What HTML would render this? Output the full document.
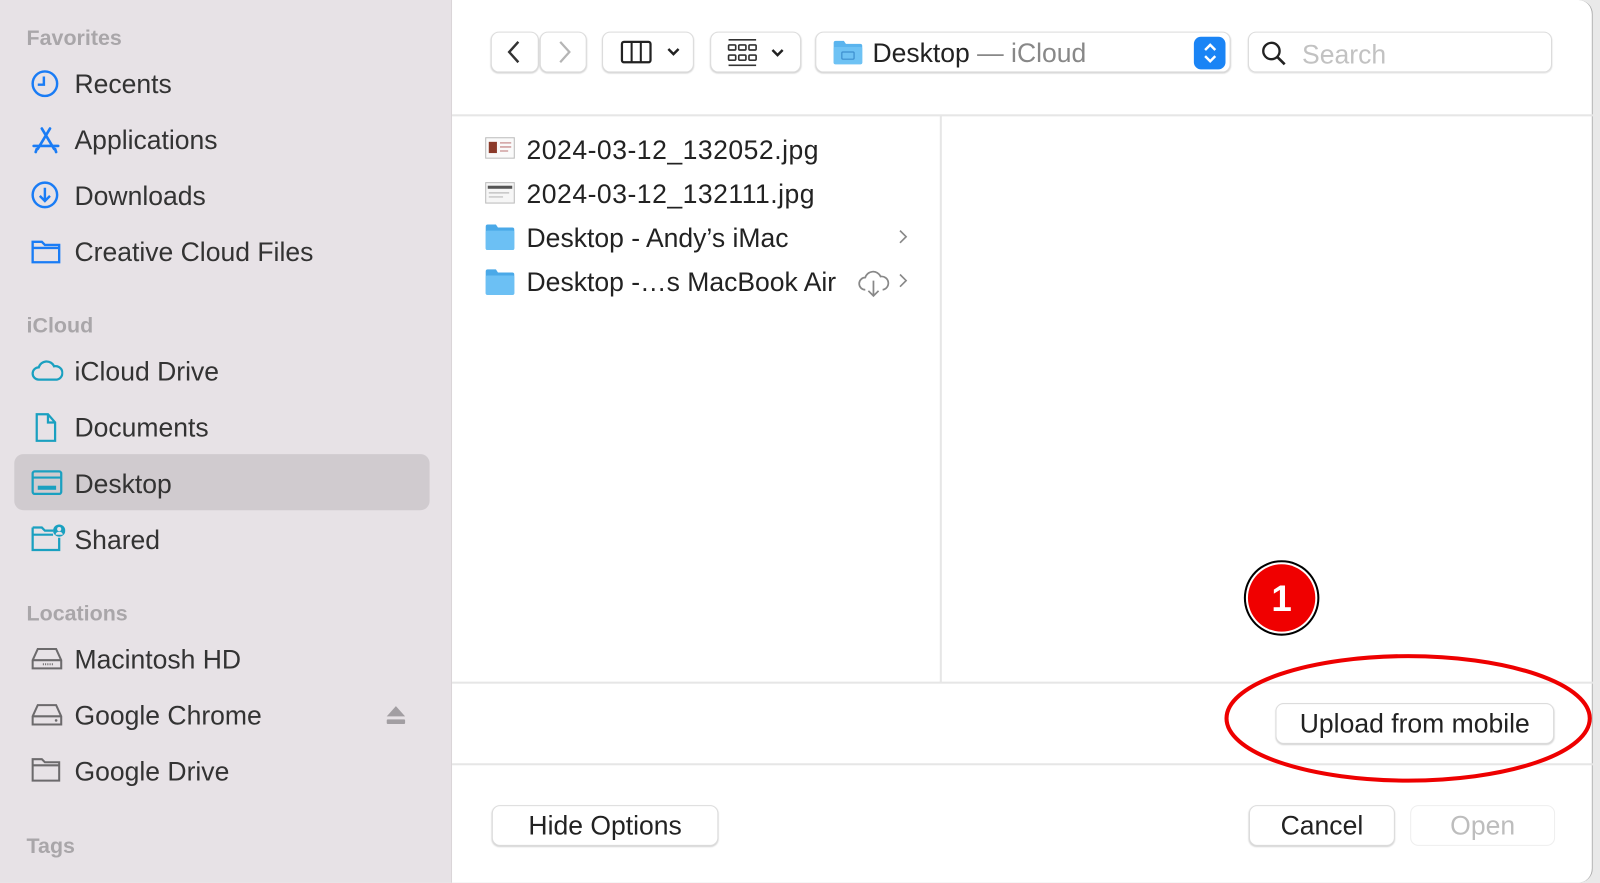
<!DOCTYPE html>
<html><head><meta charset="utf-8"><style>
*{margin:0;padding:0;box-sizing:border-box}
body{width:1600px;height:882px;overflow:hidden;background:#e9e9e9;font-family:"Liberation Sans",Helvetica,Arial,sans-serif;position:relative;color:#262626}
#w{position:absolute;left:0;top:0;width:1568px;height:865px;transform:scale(1.0204);transform-origin:0 0}
.side{position:absolute;left:0;top:0;width:443px;height:865px;background:#e7e2e6;border-right:1px solid #d9d5d8}
.hdr{position:absolute;left:26px;font-size:21px;font-weight:bold;color:#a9a6a9}
.it{position:absolute;left:73px;font-size:26px;color:#333;margin-top:1px}
.ic{position:absolute;left:30px}
.sel{position:absolute;left:14px;top:445px;width:407px;height:55px;background:#d0cbcf;border-radius:9px}
.main{position:absolute;left:443px;top:0;width:1118px;height:865px;background:#fff;border-bottom-right-radius:14px;border-top-right-radius:14px;border-right:1px solid #aaa}
.btn{position:absolute;background:#fff;border:1px solid #dcdcdc;border-radius:8px;box-shadow:0 1px 1.5px rgba(0,0,0,.18)}
.hl{position:absolute;left:0;width:1118px;height:2px;background:#e6e6e6}
.f{position:absolute;left:73px;font-size:26px;color:#222;letter-spacing:0.5px;margin-top:1px}
.bt{position:absolute;font-size:26px;text-align:center;color:#222;margin-top:1px}
</style></head><body><div id="w">
<div class="side">
<div class="hdr" style="top:26px">Favorites</div>
<svg class="ic" style="top:68px" width="28" height="28" viewBox="0 0 28 28"><circle cx="14" cy="14" r="12" fill="none" stroke="#1a7cf5" stroke-width="2.4"/><path d="M13 7v8h-6" fill="none" stroke="#1a7cf5" stroke-width="2.4"/></svg>
<div class="it" style="top:66px">Recents</div>
<svg class="ic" style="top:122px" width="30" height="30" viewBox="0 0 30 30"><path d="M11 4l12 20M19 4L7 24M3 21h24M6 24l-1 3M24 24l1 3" fill="none" stroke="#1a7cf5" stroke-width="2.6" stroke-linecap="round"/></svg>
<div class="it" style="top:121px">Applications</div>
<svg class="ic" style="top:177px" width="28" height="28" viewBox="0 0 28 28"><circle cx="14" cy="14" r="12" fill="none" stroke="#1a7cf5" stroke-width="2.4"/><path d="M14 7v13M9 15l5 5 5-5" fill="none" stroke="#1a7cf5" stroke-width="2.4"/></svg>
<div class="it" style="top:176px">Downloads</div>
<svg class="ic" style="top:233px" width="30" height="26" viewBox="0 0 30 26"><path d="M2 4h9l3 3h14v17H2zM2 10h26" fill="none" stroke="#1a7cf5" stroke-width="2.3"/></svg>
<div class="it" style="top:231px">Creative Cloud Files</div>
<div class="hdr" style="top:308px">iCloud</div>
<svg class="ic" style="top:351px" width="32" height="24" viewBox="0 0 32 24"><path d="M8 21a6 6 0 010-12 8 8 0 0115-1 6.5 6.5 0 013 13z" fill="none" stroke="#1aa0c0" stroke-width="2.2"/></svg>
<div class="it" style="top:348px">iCloud Drive</div>
<svg class="ic" style="top:404px" width="28" height="30" viewBox="0 0 28 30"><path d="M6 2h11l7 8v18H6z M17 2v8h7" fill="none" stroke="#1aa0c0" stroke-width="2.2"/></svg>
<div class="it" style="top:403px">Documents</div>
<div class="sel"></div>
<svg class="ic" style="top:460px" width="32" height="26" viewBox="0 0 32 26"><rect x="2" y="2" width="28" height="22" rx="2" fill="none" stroke="#1aa0c0" stroke-width="2.2"/><path d="M2 8h28" stroke="#1aa0c0" stroke-width="2"/><rect x="7" y="16" width="18" height="4" fill="#1aa0c0"/></svg>
<div class="it" style="top:458px">Desktop</div>
<svg class="ic" style="top:512px" width="34" height="30" viewBox="0 0 34 30"><path d="M2 5h9l3 3h8M2 5v22h26v-12M2 12h20" fill="none" stroke="#1aa0c0" stroke-width="2.2"/><circle cx="28" cy="8" r="6" fill="#1aa0c0"/><circle cx="28" cy="6.5" r="2" fill="#e7e2e6"/><path d="M24.5 12a3.5 3 0 017 0" fill="#e7e2e6"/></svg>
<div class="it" style="top:513px">Shared</div>
<div class="hdr" style="top:590px">Locations</div>
<svg class="ic" style="top:633px" width="32" height="26" viewBox="0 0 32 26"><path d="M2 14l5-11h18l5 11v8H2z M2 14h28" fill="none" stroke="#6c6a6c" stroke-width="2"/><path d="M12 18h10" stroke="#6c6a6c" stroke-width="2" stroke-dasharray="1 1.2"/></svg>
<div class="it" style="top:630px">Macintosh HD</div>
<svg class="ic" style="top:688px" width="32" height="26" viewBox="0 0 32 26"><path d="M2 14l5-11h18l5 11v8H2z M2 14h28" fill="none" stroke="#6c6a6c" stroke-width="2"/><circle cx="25" cy="18" r="1.3" fill="#6c6a6c"/></svg>
<div class="it" style="top:685px">Google Chrome</div>
<svg style="position:absolute;left:378px;top:691px" width="20" height="19" viewBox="0 0 20 19"><path d="M10 1l9 10H1z" fill="#a29ea2"/><rect x="1" y="14" width="18" height="4.5" rx="1" fill="#a29ea2"/></svg>
<svg class="ic" style="top:741px" width="30" height="26" viewBox="0 0 30 26"><path d="M2 3h9l3 3h14v18H2zM2 9h26" fill="none" stroke="#6c6a6c" stroke-width="2"/></svg>
<div class="it" style="top:740px">Google Drive</div>
<div class="hdr" style="top:818px">Tags</div>
</div>
<div class="main">
<div class="btn" style="left:38px;top:31px;width:47px;height:40px"></div>
<svg style="position:absolute;left:52px;top:39px" width="18" height="24"><path d="M13 2L4 12l9 10" fill="none" stroke="#333" stroke-width="2.4"/></svg>
<div class="btn" style="left:86px;top:31px;width:46px;height:40px"></div>
<svg style="position:absolute;left:101px;top:39px" width="18" height="24"><path d="M5 2l9 10-9 10" fill="none" stroke="#b5b5b5" stroke-width="2.2"/></svg>
<div class="btn" style="left:147px;top:31px;width:90px;height:40px"></div>
<svg style="position:absolute;left:165px;top:39px" width="60" height="24"><rect x="1.5" y="2" width="28" height="20" rx="2" fill="none" stroke="#222" stroke-width="2.2"/><path d="M11 2v20M20 2v20" stroke="#222" stroke-width="2"/><path d="M47 9l5 5 5-5" fill="none" stroke="#222" stroke-width="2.4"/></svg>
<div class="btn" style="left:253px;top:31px;width:89px;height:40px"></div>
<svg style="position:absolute;left:269px;top:37px" width="64" height="28"><path d="M2 2h27M2 27h27" stroke="#333" stroke-width="1.6"/><g fill="none" stroke="#333" stroke-width="1.6"><rect x="2" y="7" width="7" height="5" rx="1"/><rect x="12" y="7" width="7" height="5" rx="1"/><rect x="22" y="7" width="7" height="5" rx="1"/><rect x="2" y="17" width="7" height="5" rx="1"/><rect x="12" y="17" width="7" height="5" rx="1"/><rect x="22" y="17" width="7" height="5" rx="1"/></g><path d="M45 12l5 5 5-5" fill="none" stroke="#222" stroke-width="2.4"/></svg>
<div class="btn" style="left:356px;top:31px;width:407px;height:40px"></div>
<svg style="position:absolute;left:373px;top:38px" width="30" height="26"><path d="M1 4a2 2 0 012-2h8l2 3h14a2 2 0 012 2v16a2 2 0 01-2 2H3a2 2 0 01-2-2z" fill="#5ab4ee"/><rect x="1" y="8" width="28" height="17" rx="1.5" fill="#6ec2f4"/><rect x="9" y="13" width="12" height="7" rx="1" fill="none" stroke="#3d8fcf" stroke-width="1.2"/></svg>
<div style="position:absolute;left:412px;top:37px;font-size:26px;color:#222">Desktop <span style="color:#888">— iCloud</span></div>
<div style="position:absolute;left:727px;top:36px;width:31px;height:32px;background:#1a84f5;border-radius:7px"></div>
<svg style="position:absolute;left:733px;top:39px" width="20" height="26"><path d="M5 10l5-5 5 5M5 16l5 5 5-5" fill="none" stroke="#fff" stroke-width="2.4"/></svg>
<div class="btn" style="left:780px;top:31px;width:298px;height:40px;box-shadow:0 1px 1px rgba(0,0,0,.1)"></div>
<svg style="position:absolute;left:792px;top:39px" width="28" height="28"><circle cx="11" cy="11" r="8" fill="none" stroke="#222" stroke-width="2.3"/><path d="M17 17l7 7" stroke="#222" stroke-width="2.6"/></svg>
<div style="position:absolute;left:833px;top:38px;font-size:26px;color:#c2c2c2">Search</div>
<div class="hl" style="top:112px"></div>
<div style="position:absolute;left:478px;top:113px;width:2px;height:556px;background:#e6e6e6"></div>
<svg style="position:absolute;left:32px;top:134px" width="30" height="22"><rect x="1" y="1" width="28" height="20" fill="#fafafa" stroke="#bbb"/><rect x="4" y="5" width="8" height="11" fill="#8b3a2a"/><path d="M15 6h11M15 10h11M15 14h8" stroke="#d0a0a0" stroke-width="1.5"/></svg>
<div class="f" style="top:131px">2024-03-12_132052.jpg</div>
<svg style="position:absolute;left:32px;top:178px" width="30" height="22"><rect x="1" y="1" width="28" height="20" fill="#f6f6f6" stroke="#bbb"/><rect x="3" y="4" width="24" height="3" fill="#555"/><path d="M4 11h20M4 15h14" stroke="#bbb" stroke-width="1.2"/></svg>
<div class="f" style="top:174px">2024-03-12_132111.jpg</div>
<svg style="position:absolute;left:32px;top:219px" width="30" height="27"><path d="M1 3a2 2 0 012-2h8l2 3h14a2 2 0 012 2v18a2 2 0 01-2 2H3a2 2 0 01-2-2z" fill="#4aa9e8"/><rect x="1" y="7" width="28" height="19" rx="1.5" fill="#6cc0f4"/></svg>
<div class="f" style="top:217px;letter-spacing:0">Desktop - Andy’s iMac</div>
<svg style="position:absolute;left:436px;top:224px" width="12" height="16"><path d="M3 2l6 6-6 6" fill="none" stroke="#888" stroke-width="1.6"/></svg>
<svg style="position:absolute;left:32px;top:263px" width="30" height="27"><path d="M1 3a2 2 0 012-2h8l2 3h14a2 2 0 012 2v18a2 2 0 01-2 2H3a2 2 0 01-2-2z" fill="#4aa9e8"/><rect x="1" y="7" width="28" height="19" rx="1.5" fill="#6cc0f4"/></svg>
<div class="f" style="top:260px;letter-spacing:0">Desktop -…s MacBook Air</div>
<svg style="position:absolute;left:396px;top:262px" width="34" height="30"><path d="M9 22a6 6 0 010-12 8 8 0 0115-1 6.5 6.5 0 012 13" fill="none" stroke="#888" stroke-width="1.7"/><path d="M17 13v15M12 23l5 5 5-5" fill="none" stroke="#888" stroke-width="1.7"/></svg>
<svg style="position:absolute;left:436px;top:267px" width="12" height="16"><path d="M3 2l6 6-6 6" fill="none" stroke="#888" stroke-width="1.6"/></svg>
<div class="hl" style="top:668px"></div>
<div class="hl" style="top:748px"></div>
<div class="btn" style="left:807px;top:689px;width:273px;height:40px"></div>
<div class="bt" style="left:807px;top:693px;width:273px">Upload from mobile</div>
<div class="btn" style="left:39px;top:789px;width:222px;height:40px"></div>
<div class="bt" style="left:39px;top:793px;width:222px">Hide Options</div>
<div class="btn" style="left:781px;top:789px;width:143px;height:40px"></div>
<div class="bt" style="left:781px;top:793px;width:143px">Cancel</div>
<div class="btn" style="left:939px;top:789px;width:142px;height:40px;box-shadow:none;border-color:#eee"></div>
<div class="bt" style="left:939px;top:793px;width:142px;color:#bdbdbd">Open</div>
</div>
<svg style="position:absolute;left:0;top:0" width="1568" height="865">
<ellipse cx="1380" cy="704" rx="178" ry="61" fill="none" stroke="#ee0000" stroke-width="4"/>
<circle cx="1256" cy="586" r="37" fill="#000"/><circle cx="1256" cy="586" r="35" fill="#fff"/><circle cx="1256" cy="586" r="33" fill="#f00000"/>
<text x="1256" y="599" text-anchor="middle" font-family="Liberation Sans" font-weight="bold" font-size="36" fill="#fff">1</text>
</svg>
</div></body></html>
